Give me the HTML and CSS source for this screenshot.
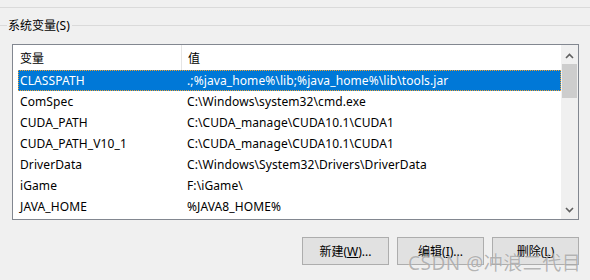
FILE: index.html
```html
<!DOCTYPE html>
<html lang="zh">
<head>
	<meta charset="UTF-8">
	<title>系统变量</title>
	<link rel="stylesheet" href="styles.css">
</head>
<body>
<div class="topline"></div>
<div class="grouphead"><span class="grouplabel">系统变量(S)</span></div>
<div class="listbox">
	<div class="list">
		<div class="head">
			<div class="c1">变量</div>
			<div class="c2">值</div>
		</div>
		<div class="row sel"><div class="c1">CLASSPATH</div><div class="c2">.;%java_home%\lib;%java_home%\lib\tools.jar</div></div>
		<div class="row"><div class="c1">ComSpec</div><div class="c2">C:\Windows\system32\cmd.exe</div></div>
		<div class="row"><div class="c1">CUDA_PATH</div><div class="c2">C:\CUDA_manage\CUDA10.1\CUDA1</div></div>
		<div class="row"><div class="c1">CUDA_PATH_V10_1</div><div class="c2">C:\CUDA_manage\CUDA10.1\CUDA1</div></div>
		<div class="row"><div class="c1">DriverData</div><div class="c2">C:\Windows\System32\Drivers\DriverData</div></div>
		<div class="row"><div class="c1">iGame</div><div class="c2">F:\iGame\</div></div>
		<div class="row"><div class="c1">JAVA_HOME</div><div class="c2">%JAVA8_HOME%</div></div>
	</div>
	<div class="scroll">
		<svg class="arrow" width="9" height="6" viewBox="0 0 9 6"><path d="M1 5 L4.5 1.5 L8 5" fill="none" stroke="#606060" stroke-width="1.6"/></svg>
		<div class="thumb"></div>
		<div class="track"></div>
		<svg class="arrow" width="9" height="6" viewBox="0 0 9 6"><path d="M1 1 L4.5 4.5 L8 1" fill="none" stroke="#606060" stroke-width="1.6"/></svg>
	</div>
</div>
<div class="buttons">
	<button class="btn">新建(<u>W</u>)...</button>
	<button class="btn">编辑(<u>I</u>)...</button>
	<button class="btn">删除(<u>L</u>)</button>
</div>
<div class="watermark">CSDN @冲浪二代目</div>
</body>
</html>
```
FILE: styles.css
```css
body { margin:0; width:590px; height:280px; overflow:hidden; position:relative; background:#f0f0f0; font-family:"Noto Sans", "Noto Sans CJK SC", sans-serif; font-size:12px; color:#000; }
.topline { height:7px; border-bottom:1px solid #dadada; }
.grouphead { display:flex; align-items:center; height:20px; margin-top:7px; }
.grouphead:before { content:""; width:7px; border-top:1px solid #dadada; }
.grouphead:after { content:""; flex:1; border-top:1px solid #dadada; }
.grouplabel { padding:0 2px 0 1px; }
.listbox { display:flex; margin:9px 0 0 12px; width:565px; height:174px; border:1px solid #828790; background:#fff; }
.list { flex:1; padding-left:5px; }
.head { display:flex; height:25px; align-items:center; }
.head .c1 { align-self:stretch; display:flex; align-items:center; border-right:1px solid #e5e5e5; }
.row { display:flex; height:21px; align-items:center; white-space:nowrap; letter-spacing:0.1px; }
.c1 { width:161px; padding-left:2px; }
.c2 { padding-left:6px; }
.sel { background:#0078d7; color:#fff; outline:1px dotted #f0a030; outline-offset:-1px; }
.scroll { width:17px; background:#f0f0f0; display:flex; flex-direction:column; align-items:center; }
.arrow { margin:8px 0 5px; }
.arrow:last-child { margin:0 0 6px; }
.thumb { width:15px; height:34px; background:#cdcdcd; }
.track { flex:1; }
.buttons { display:flex; gap:8px; justify-content:flex-end; margin:17px 11px 0 0; }
.btn { width:87px; height:28px; background:#e1e1e1; border:1px solid #adadad; font:inherit; color:#000; padding:0; }
.watermark { position:absolute; left:408px; top:248px; font-size:19px; color:rgba(110,110,110,0.5); text-shadow:0 0 1px rgba(255,255,255,0.8); letter-spacing:0.5px; white-space:nowrap; }
```
